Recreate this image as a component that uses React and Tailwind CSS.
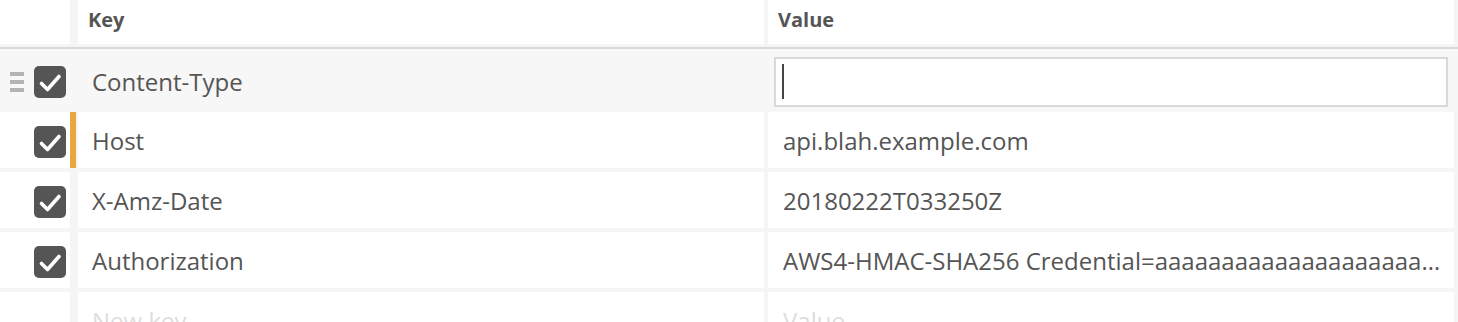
import React from 'react';

const rows = [
  { key: 'Host', value: 'api.blah.example.com', changed: true },
  { key: 'X-Amz-Date', value: '20180222T033250Z' },
  {
    key: 'Authorization',
    value:
      'AWS4-HMAC-SHA256 Credential=aaaaaaaaaaaaaaaaaaaaaaaaaaaaaaaaaaaaaaaaaaaaa/20180222/us-east-1/execute-api/aws4_request',
  },
];

const Check = () => (
  <div className="w-[32px] h-[32px] rounded-[5px] bg-[#555555] flex items-center justify-center shrink-0">
    <svg width="32" height="32" viewBox="0 0 32 32">
      <path d="M7.5 17.5 L13.5 23.5 L25 10.5" fill="none" stroke="#ffffff" strokeWidth="3.6" strokeLinecap="round" strokeLinejoin="round" />
    </svg>
  </div>
);

const Handle = () => (
  <div className="flex flex-col gap-[4px] w-[14px]">
    <div className="h-[4px] bg-[#b3b3b3]" />
    <div className="h-[4px] bg-[#b3b3b3]" />
    <div className="h-[4px] bg-[#b3b3b3]" />
  </div>
);

export default function App() {
  return (
    <div
      className="w-[1458px] h-[322px] overflow-hidden bg-[#f5f5f5] text-[#555555]"
      style={{ fontFamily: '"Open Sans", "Liberation Sans", sans-serif' }}
    >
      {/* header */}
      <div className="flex h-[44px]">
        <div className="w-[70px] bg-white" />
        <div className="ml-[8px] w-[686px] bg-white flex items-center pl-[10px] pb-[4px] text-[20px] font-bold">Key</div>
        <div className="ml-[4px] w-[686px] bg-white flex items-center pl-[10px] pb-[4px] text-[20px] font-bold">Value</div>
      </div>
      <div className="mt-[3px] h-[2px] bg-[#d9d9d9]" />

      {/* editing row */}
      <div className="flex h-[63px] bg-[#f7f7f7] items-center pt-[2px]">
        <div className="w-[70px] flex items-center pl-[10px] gap-[10px]">
          <Handle />
          <Check />
        </div>
        <div className="ml-[8px] w-[686px] pl-[14px] text-[24px]">Content-Type</div>
        <div className="ml-[4px] w-[686px] pl-[6px] pr-[6px]">
          <div className="h-[50px] bg-white border-2 border-[#d9d9d9] flex items-center pl-[6px]">
            <div className="w-[2px] h-[35px] bg-[#444444]" />
          </div>
        </div>
      </div>

      {rows.map((r, i) => (
        <div key={i} className={`flex h-[56px] ${i === 0 ? '' : 'mt-[4px]'}`}>
          <div className="w-[70px] bg-white flex items-center pl-[34px] pt-[3px]">
            <Check />
          </div>
          <div className={`w-[6px] ${r.changed ? 'bg-[#e9a83f]' : ''}`} />
          <div className="ml-[2px] w-[686px] bg-white flex items-center pl-[14px] pt-[2px] text-[24px]">{r.key}</div>
          <div className="ml-[4px] w-[686px] bg-white flex items-center pl-[15px] pr-[12px] pt-[2px] text-[24px] min-w-0">
            <span className="truncate">{r.value}</span>
          </div>
        </div>
      ))}

      {/* new row */}
      <div className="flex h-[56px] mt-[4px]">
        <div className="w-[70px] bg-white" />
        <div className="ml-[8px] w-[686px] bg-white flex items-center pl-[14px] pt-[2px] text-[24px] text-[#dddddd]">New key</div>
        <div className="ml-[4px] w-[686px] bg-white flex items-center pl-[15px] pt-[2px] text-[24px] text-[#dddddd]">Value</div>
      </div>
    </div>
  );
}
